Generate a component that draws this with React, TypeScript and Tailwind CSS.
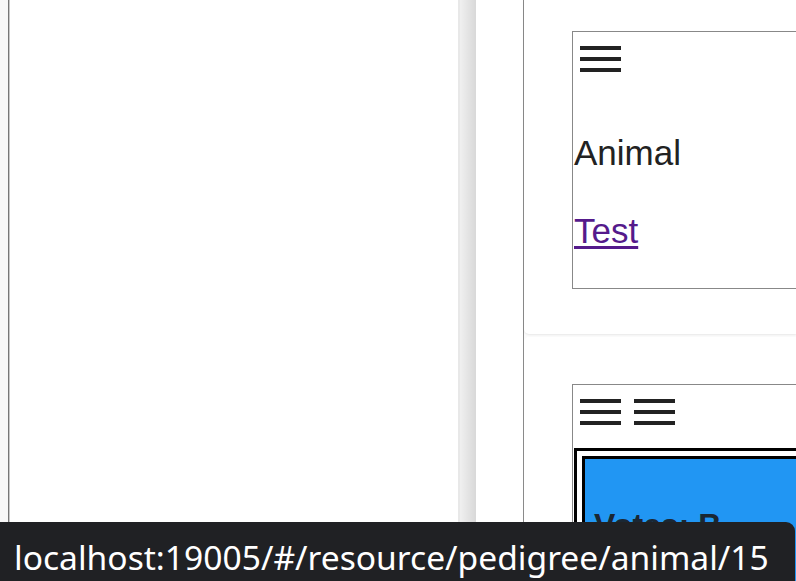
import React from "react";

function Hamburger() {
  return (
    <svg width="41" height="27" viewBox="0 0 41 27" className="block">
      <rect x="0" y="0" width="41" height="4" fill="#222" />
      <rect x="0" y="11" width="41" height="4" fill="#222" />
      <rect x="0" y="22" width="41" height="4" fill="#222" />
    </svg>
  );
}

export default function App() {
  return (
    <div className="relative w-[796px] h-[581px] overflow-hidden bg-white flex font-['Liberation_Sans',Arial,sans-serif]">
      <div className="w-[8px] h-full bg-[#f8f8f8] shrink-0" />
      <div className="w-[1px] h-full bg-[#777] shrink-0" />
      <div className="w-[1px] h-full bg-[#c8c8c8] shrink-0" />
      <div className="w-[448px] h-full bg-white shrink-0" />
      <div className="w-[2px] h-full bg-[#e8e8e8] shrink-0" />
      <div className="w-[16px] h-full bg-gradient-to-r from-[#f0f0f0] to-[#d8d8d8] shrink-0" />
      <div className="w-[47px] h-full bg-white shrink-0" />
      <div className="w-[1px] h-full bg-[#8a8a8a] shrink-0" />
      <div className="flex-1 flex flex-col gap-[3px] bg-[#fbfbfb]">
        <div className="bg-white rounded-bl-[5px] shadow-[0_1px_2px_rgba(0,0,0,0.08)] pt-[31px] pb-[45px] pl-[48px]">
          <div className="border border-[#888] border-r-0 pb-[37px]">
            <div className="mt-[14px] ml-[7px]">
              <Hamburger />
            </div>
            <div className="mt-[60px] pl-[1px] text-[35px] leading-[40px] text-[#222]">Animal</div>
            <div className="mt-[38px] pl-[1px] text-[35px] leading-[40px]">
              <a href="#" className="text-[#551a8b] underline decoration-[3px] underline-offset-[3px]">Test</a>
            </div>
          </div>
        </div>
        <div className="flex-1 bg-white rounded-tl-[5px] pt-[47px] pl-[48px]">
          <div className="border border-[#888] border-r-0 h-[300px]">
            <div className="mt-[14px] ml-[7px] flex gap-[13px]">
              <Hamburger />
              <Hamburger />
            </div>
            <div className="mt-[22px] ml-[1px] border-[3px] border-r-0 border-black bg-white pt-[5px] pl-[5px] h-[200px]">
              <div className="border-[3px] border-r-0 border-black bg-[#2196f3] h-full pt-[48px] pl-[9px]">
                <div className="text-[32px] leading-[37px] font-bold text-[#1a2733] whitespace-nowrap">Votes: B</div>
              </div>
            </div>
          </div>
        </div>
      </div>
      <div className="absolute left-0 bottom-0 w-[795px] h-[59px] bg-[#202124] rounded-tr-[9px] pl-[14px] pt-[15px]">
        <div className="text-white text-[33.6px] leading-[40px] whitespace-nowrap font-['Noto_Sans','Open_Sans',sans-serif]">
          localhost:19005/#/resource/pedigree/animal/15
        </div>
      </div>
    </div>
  );
}
